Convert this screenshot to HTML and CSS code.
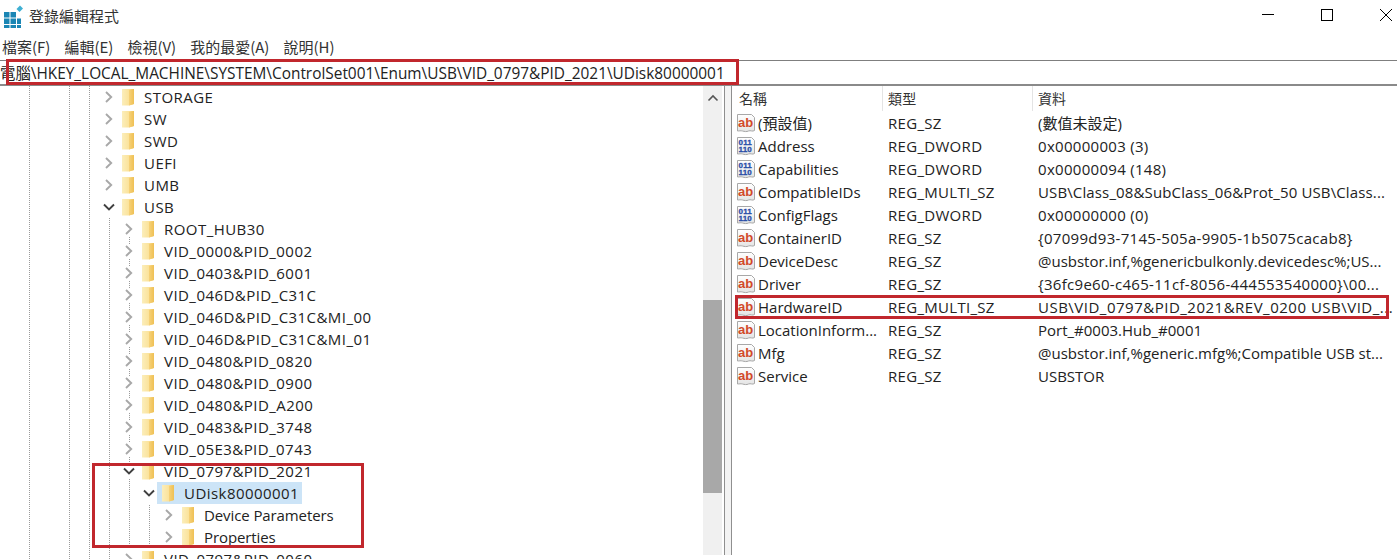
FILE: index.html
```html
<!DOCTYPE html>
<html lang="zh-Hant">
<head>
<meta charset="utf-8">
<title>登錄編輯程式</title>
<link rel="stylesheet" href="styles.css">
</head>
<body>
<svg class="defs" width="0" height="0">
  <defs>
    <linearGradient id="fg" x1="0" x2="1" y1="0" y2="0"><stop offset="0" stop-color="#fbeebc"/><stop offset=".55" stop-color="#fbe39c"/><stop offset="1" stop-color="#f2c862"/></linearGradient>
    <linearGradient id="fr" x1="0" x2="1" y1="0" y2="0"><stop offset="0" stop-color="#f6d27a"/><stop offset="1" stop-color="#efc054"/></linearGradient>
    <linearGradient id="pg" x1="0" x2="0" y1="0" y2="1"><stop offset="0" stop-color="#ffffff"/><stop offset="1" stop-color="#e4e4e4"/></linearGradient>
    <symbol id="folder" viewBox="0 0 14 18"><path d="M1 1h12v15l-5 1.500H1z" fill="url(#fg)"/><path d="M8 2l5-1v15l-5 1.500z" fill="url(#fr)"/></symbol>
    <symbol id="closed" viewBox="0 0 12 12"><path d="M3 1L8.200 6 3 11" fill="none" stroke="#a8a8a8" stroke-width="1.900"/></symbol>
    <symbol id="open" viewBox="0 0 12 12"><path d="M1 3.500L6 8.500l5-5" fill="none" stroke="#404040" stroke-width="1.900"/></symbol>
    <symbol id="ab" viewBox="0 0 20 20"><path d="M1.500 1.500h14l3 3v13c-2 1.500-4-.5-6 .5s-4 .5-6 0-3 0-5 0z" fill="url(#pg)" stroke="#a8a8a8"/><text x="2" y="13.500" class="ab-text">ab</text></symbol>
    <symbol id="bin" viewBox="0 0 20 20"><path d="M1.500 1.500h14l3 3v13c-2 1.500-4-.5-6 .5s-4 .5-6 0-3 0-5 0z" fill="url(#pg)" stroke="#a8a8a8"/><text x="2.500" y="9" class="bin-text">011</text><text x="2.500" y="16" class="bin-text">110</text></symbol>
  </defs>
</svg>
<div class="window">
  <header class="titlebar">
    <svg class="app-icon" width="22" height="24" viewBox="0 0 22 24"><path d="M3 8h5.500v5.500H3zM9.500 8H15v5.500H9.500zM3 14.500h5.500V20H3zM9.500 14.500H15V20H9.500zM16 14.500h4V20h-4zM3 21h5.500v3H3zM9.500 21H15v3H9.500zM16 21h4v3h-4z" fill="#1b86b4"/><path d="M15.500 5l3.500-3.500 3 3L18.500 8z" fill="#3fb0d3"/></svg>
    <span class="title">登錄編輯程式</span>
    <div class="controls">
      <svg width="14" height="14" viewBox="0 0 14 14"><path d="M1 6.500h12" stroke="#000"/></svg>
      <svg width="14" height="14" viewBox="0 0 14 14"><rect x="1.500" y="1.500" width="11" height="11" fill="none" stroke="#000"/></svg>
      <svg width="14" height="14" viewBox="0 0 14 14"><path d="M1 1l12 12M13 1L1 13" stroke="#000"/></svg>
    </div>
  </header>
  <nav class="menubar">
    <span>檔案(F)</span><span>編輯(E)</span><span>檢視(V)</span><span>我的最愛(A)</span><span>說明(H)</span>
  </nav>
  <div class="address"><span class="address-text">電腦\HKEY_LOCAL_MACHINE\SYSTEM\ControlSet001\Enum\USB\VID_0797&amp;PID_2021\UDisk80000001</span></div>
  <main class="panes">
    <section class="tree-pane">
      <div class="guide g1"></div><div class="guide g2"></div><div class="guide g3"></div><div class="guide g4"></div><div class="guide g5"></div><div class="guide g6"></div>
      <ul class="tree">
        <li class="node d0"><svg class="tw"><use href="#closed"/></svg><svg class="fd"><use href="#folder"/></svg><span class="caps">STORAGE</span></li>
        <li class="node d0"><svg class="tw"><use href="#closed"/></svg><svg class="fd"><use href="#folder"/></svg><span class="caps">SW</span></li>
        <li class="node d0"><svg class="tw"><use href="#closed"/></svg><svg class="fd"><use href="#folder"/></svg><span class="caps">SWD</span></li>
        <li class="node d0"><svg class="tw"><use href="#closed"/></svg><svg class="fd"><use href="#folder"/></svg><span class="caps">UEFI</span></li>
        <li class="node d0"><svg class="tw"><use href="#closed"/></svg><svg class="fd"><use href="#folder"/></svg><span class="caps">UMB</span></li>
        <li class="node d0"><svg class="tw"><use href="#open"/></svg><svg class="fd"><use href="#folder"/></svg><span class="caps">USB</span></li>
        <li class="node d1"><svg class="tw"><use href="#closed"/></svg><svg class="fd"><use href="#folder"/></svg><span class="caps">ROOT_HUB30</span></li>
        <li class="node d1"><svg class="tw"><use href="#closed"/></svg><svg class="fd"><use href="#folder"/></svg><span class="caps">VID_0000&amp;PID_0002</span></li>
        <li class="node d1"><svg class="tw"><use href="#closed"/></svg><svg class="fd"><use href="#folder"/></svg><span class="caps">VID_0403&amp;PID_6001</span></li>
        <li class="node d1"><svg class="tw"><use href="#closed"/></svg><svg class="fd"><use href="#folder"/></svg><span class="caps">VID_046D&amp;PID_C31C</span></li>
        <li class="node d1"><svg class="tw"><use href="#closed"/></svg><svg class="fd"><use href="#folder"/></svg><span class="caps">VID_046D&amp;PID_C31C&amp;MI_00</span></li>
        <li class="node d1"><svg class="tw"><use href="#closed"/></svg><svg class="fd"><use href="#folder"/></svg><span class="caps">VID_046D&amp;PID_C31C&amp;MI_01</span></li>
        <li class="node d1"><svg class="tw"><use href="#closed"/></svg><svg class="fd"><use href="#folder"/></svg><span class="caps">VID_0480&amp;PID_0820</span></li>
        <li class="node d1"><svg class="tw"><use href="#closed"/></svg><svg class="fd"><use href="#folder"/></svg><span class="caps">VID_0480&amp;PID_0900</span></li>
        <li class="node d1"><svg class="tw"><use href="#closed"/></svg><svg class="fd"><use href="#folder"/></svg><span class="caps">VID_0480&amp;PID_A200</span></li>
        <li class="node d1"><svg class="tw"><use href="#closed"/></svg><svg class="fd"><use href="#folder"/></svg><span class="caps">VID_0483&amp;PID_3748</span></li>
        <li class="node d1"><svg class="tw"><use href="#closed"/></svg><svg class="fd"><use href="#folder"/></svg><span class="caps">VID_05E3&amp;PID_0743</span></li>
        <li class="node d1"><svg class="tw"><use href="#open"/></svg><svg class="fd"><use href="#folder"/></svg><span class="caps">VID_0797&amp;PID_2021</span></li>
        <li class="node d2"><svg class="tw"><use href="#open"/></svg><span class="selected"><svg class="fd"><use href="#folder"/></svg><span class="caps">UDisk80000001</span></span></li>
        <li class="node d3"><svg class="tw"><use href="#closed"/></svg><svg class="fd"><use href="#folder"/></svg><span class="lower">Device Parameters</span></li>
        <li class="node d3"><svg class="tw"><use href="#closed"/></svg><svg class="fd"><use href="#folder"/></svg><span class="lower">Properties</span></li>
        <li class="node d1"><svg class="tw"><use href="#closed"/></svg><svg class="fd"><use href="#folder"/></svg><span class="caps">VID_0797&amp;PID_0060</span></li>
      </ul>
      <div class="scrollbar">
        <svg class="sb-arrow" width="12" height="8" viewBox="0 0 12 8"><path d="M1.500 6.500L6 2l4.500 4.500" fill="none" stroke="#555" stroke-width="1.600"/></svg>
        <div class="sb-thumb"></div>
      </div>
    </section>
    <div class="splitter"></div>
    <section class="list-pane">
      <div class="list-row list-head"><span class="c1"><span class="head-label">名稱</span></span><span class="c2">類型</span><span class="c3">資料</span></div>
      <div class="list-row"><span class="c1"><svg class="ri"><use href="#ab"/></svg>(預設值)</span><span class="c2">REG_SZ</span><span class="c3">(數值未設定)</span></div>
      <div class="list-row"><span class="c1"><svg class="ri"><use href="#bin"/></svg>Address</span><span class="c2">REG_DWORD</span><span class="c3 sp3">0x00000003 (3)</span></div>
      <div class="list-row"><span class="c1"><svg class="ri"><use href="#bin"/></svg>Capabilities</span><span class="c2">REG_DWORD</span><span class="c3 sp3">0x00000094 (148)</span></div>
      <div class="list-row"><span class="c1"><svg class="ri"><use href="#ab"/></svg>CompatibleIDs</span><span class="c2">REG_MULTI_SZ</span><span class="c3 sp1">USB\Class_08&amp;SubClass_06&amp;Prot_50 USB\Class...</span></div>
      <div class="list-row"><span class="c1"><svg class="ri"><use href="#bin"/></svg>ConfigFlags</span><span class="c2">REG_DWORD</span><span class="c3 sp3">0x00000000 (0)</span></div>
      <div class="list-row"><span class="c1"><svg class="ri"><use href="#ab"/></svg>ContainerID</span><span class="c2">REG_SZ</span><span class="c3 sp3">{07099d93-7145-505a-9905-1b5075cacab8}</span></div>
      <div class="list-row"><span class="c1"><svg class="ri"><use href="#ab"/></svg>DeviceDesc</span><span class="c2">REG_SZ</span><span class="c3">@usbstor.inf,%genericbulkonly.devicedesc%;US...</span></div>
      <div class="list-row"><span class="c1"><svg class="ri"><use href="#ab"/></svg>Driver</span><span class="c2">REG_SZ</span><span class="c3 sp3">{36fc9e60-c465-11cf-8056-444553540000}\00...</span></div>
      <div class="list-row"><span class="c1"><svg class="ri"><use href="#ab"/></svg>HardwareID</span><span class="c2">REG_MULTI_SZ</span><span class="c3 sp5">USB\VID_0797&amp;PID_2021&amp;REV_0200 USB\VID_...</span></div>
      <div class="list-row"><span class="c1"><svg class="ri"><use href="#ab"/></svg>LocationInform...</span><span class="c2">REG_SZ</span><span class="c3">Port_#0003.Hub_#0001</span></div>
      <div class="list-row"><span class="c1"><svg class="ri"><use href="#ab"/></svg>Mfg</span><span class="c2">REG_SZ</span><span class="c3">@usbstor.inf,%generic.mfg%;Compatible USB st...</span></div>
      <div class="list-row"><span class="c1"><svg class="ri"><use href="#ab"/></svg>Service</span><span class="c2">REG_SZ</span><span class="c3">USBSTOR</span></div>
    </section>
  </main>
  <div class="mark mark-address"></div>
  <div class="mark mark-tree"></div>
  <div class="mark mark-list"></div>
</div>
</body>
</html>
```
FILE: styles.css
```css
* { box-sizing: border-box; }
html, body { margin: 0; padding: 0; background: #fff; }
body { width: 1397px; height: 559px; overflow: hidden; font-family: "Open Sans", "Noto Sans CJK TC", sans-serif; color: #222; }
.defs { position: absolute; }
.window { position: relative; height: 559px; overflow: hidden; }
.titlebar { display: flex; align-items: center; height: 32px; padding-left: 1px; }
.app-icon { flex: none; }
.title { margin-left: 6px; font: 15px/1 "Noto Sans CJK TC", sans-serif; color: #333; position: relative; top: -1px; }
.controls { margin-left: auto; display: flex; gap: 45px; padding-right: 4px; align-items: center; position: relative; top: -1px; }
.menubar { display: flex; gap: 14px; height: 28px; padding-left: 2px; align-items: center; font: 15px "Noto Sans CJK TC", sans-serif; color: #333; }
.address { height: 26px; border-top: 1px solid #7f7f7f; border-bottom: 2px solid #8a8a8a; overflow: hidden; display: flex; align-items: center; }
.address-text { font: 15.400px "Open Sans", "Noto Sans CJK TC", sans-serif; white-space: nowrap; color: #222; }
.panes { display: flex; height: 473px; align-items: flex-start; }
.tree-pane { position: relative; width: 724px; height: 473px; flex: none; display: flex; overflow: hidden; }
.guide { position: absolute; top: 0; bottom: 0; width: 0; border-left: 1px dotted #9a9a9a; }
.g1 { left: 29px; }
.g2 { left: 69px; }
.g3 { left: 89px; }
.g4 { left: 109px; top: 132px; }
.g5 { left: 129px; top: 142px; bottom: 11px; }
.g6 { left: 149px; top: 419px; bottom: 11px; }
.tree { list-style: none; margin: 0; padding: 0; flex: 1; position: relative; }
.node { display: flex; align-items: center; height: 22px; font-size: 15px; color: #222; white-space: nowrap; }
.caps { letter-spacing: .45px; }
.lower { letter-spacing: -.1px; }
.d0 { padding-left: 103px; }
.d1 { padding-left: 123px; }
.d2 { padding-left: 143px; }
.d3 { padding-left: 163px; }
.tw { width: 12px; height: 14px; flex: none; margin-right: 6px; background: #fff; }
.fd { width: 14px; height: 18px; flex: none; margin-right: 9px; }
.selected { display: flex; align-items: center; height: 22px; background: #cce4f7; padding: 0 3px 0 4px; margin-left: -4px; }
.scrollbar { width: 19px; height: 469px; flex: none; margin-right: 2px; background: #f0f0f0; display: flex; flex-direction: column; align-items: center; padding-top: 8px; }
.sb-thumb { width: 19px; height: 193px; margin-top: 198px; background: #a8a8a8; }
.splitter { width: 8px; height: 469px; flex: none; background: #f3f3f3; border-left: 1px solid #8f8f8f; border-right: 1px solid #8f8f8f; }
.list-pane { flex: 1; overflow: hidden; }
.list-row { display: flex; align-items: center; height: 23px; font-size: 15px; white-space: nowrap; color: #222; }
.list-head { height: 25px; font: 14px "Noto Sans CJK TC", sans-serif; color: #333; }
.c1 { width: 151px; padding-left: 4px; display: flex; align-items: center; flex: none; }
.c2 { width: 150px; padding-left: 5px; flex: none; letter-spacing: .3px; }
.c3 { padding-left: 5px; flex: 1; }
.sp1 { letter-spacing: .13px; }
.sp3 { letter-spacing: .3px; }
.sp5 { letter-spacing: .5px; }
.head-label { padding-left: 3px; }
.list-head .c1, .list-head .c2 { border-right: 1px solid #e4e4e4; height: 25px; line-height: 25px; }
.list-head .c3 { line-height: 25px; }
.ri { width: 20px; height: 20px; flex: none; margin-right: 2px; }
.ab-text { font: bold 13px "Liberation Sans", sans-serif; fill: #d2492a; }
.bin-text { font: bold 8px "Liberation Sans", sans-serif; fill: #2a4fa8; stroke: #2a4fa8; stroke-width: .3px; letter-spacing: .2px; }
.mark { position: absolute; border: 3px solid #c1272d; pointer-events: none; }
.mark-address { left: 6px; top: 59px; width: 733px; height: 26px; }
.mark-tree { left: 92px; top: 463px; width: 272px; height: 85px; }
.mark-list { left: 735px; top: 295px; width: 654px; height: 24px; }
```
